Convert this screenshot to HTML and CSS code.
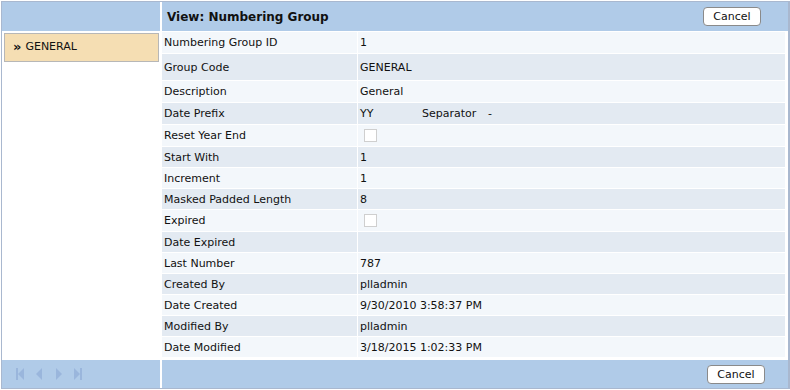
FILE: index.html
```html
<!DOCTYPE html>
<html lang="en">

<head>
    <meta charset="UTF-8">
    <title>View: Numbering Group</title>
    <link rel="stylesheet" href="styles.css">
</head>

<body>
    <div class="panel">
        <div class="head-left"></div>
        <div class="head-right">
            <span class="title">View: Numbering Group</span>
            <button class="btn">Cancel</button>
        </div>

        <div class="side">
            <div class="side-item"><span class="raquo">&raquo;</span> GENERAL</div>
        </div>
        <div class="content">
            <table class="details">
                <tr class="odd"><td class="label">Numbering Group ID</td><td>1</td></tr>
                <tr class="even tall"><td class="label">Group Code</td><td>GENERAL</td></tr>
                <tr class="odd"><td class="label">Description</td><td>General</td></tr>
                <tr class="even"><td class="label">Date Prefix</td><td><span class="prefix">YY</span><span class="sep">Separator</span>-</td></tr>
                <tr class="odd"><td class="label">Reset Year End</td><td><span class="check"></span></td></tr>
                <tr class="even short"><td class="label">Start With</td><td>1</td></tr>
                <tr class="odd short"><td class="label">Increment</td><td>1</td></tr>
                <tr class="even short"><td class="label">Masked Padded Length</td><td>8</td></tr>
                <tr class="odd"><td class="label">Expired</td><td><span class="check"></span></td></tr>
                <tr class="even short"><td class="label">Date Expired</td><td></td></tr>
                <tr class="odd short"><td class="label">Last Number</td><td>787</td></tr>
                <tr class="even short"><td class="label">Created By</td><td>plladmin</td></tr>
                <tr class="odd short"><td class="label">Date Created</td><td>9/30/2010 3:58:37 PM</td></tr>
                <tr class="even short"><td class="label">Modified By</td><td>plladmin</td></tr>
                <tr class="odd short"><td class="label">Date Modified</td><td>3/18/2015 1:02:33 PM</td></tr>
            </table>
        </div>

        <div class="foot-left">
            <!-- pager, disabled -->
            <svg class="pager" width="80" height="14" viewBox="0 0 80 14">
                <rect x="2" y="1" width="2" height="12" />
                <polygon points="10,1 4,7 10,13" />
                <polygon points="28,1 22,7 28,13" />
                <polygon points="42,1 48,7 42,13" />
                <polygon points="60,1 66,7 60,13" />
                <rect x="66" y="1" width="2" height="12" />
            </svg>
        </div>
        <div class="foot-right">
            <button class="btn">Cancel</button>
        </div>
    </div>
</body>

</html>
```

FILE: styles.css
```css
body {
    margin: 0;
    padding: 0;
    background-color: #fff;
    font-family: 'DejaVu Sans', Verdana, sans-serif;
    font-size: 11px;
    color: #111;
}

.panel {
    box-sizing: border-box;
    margin: 1px 0 0 1px;
    width: 789px;
    height: 388px;
    border: 1px solid #a9b8cf;
    border-right-width: 2px;
    padding: 0;
    display: grid;
    grid-template-columns: 158px 1fr;
    grid-template-rows: 29px 1fr 28px;
    column-gap: 2px;
    row-gap: 1px;
}

.head-left,
.head-right,
.foot-left,
.foot-right {
    background-color: #b0cbe8;
}

.head-right {
    display: flex;
    align-items: center;
    justify-content: space-between;
    padding: 0 27px 0 5px;
}

.title {
    font-size: 12px;
    font-weight: bold;
    color: #111;
}

.btn {
    box-sizing: border-box;
    width: 58px;
    height: 19px;
    padding: 0;
    background-color: #fff;
    border: 1px solid #8a8a8a;
    border-radius: 4px;
    font-family: 'DejaVu Sans', Verdana, sans-serif;
    font-size: 11px;
    color: #111;
}

.side {
    padding: 1px 0 0 2px;
}

.side-item {
    box-sizing: border-box;
    width: 155px;
    height: 29px;
    padding: 0 8px 2px;
    display: flex;
    align-items: center;
    background-color: #f5deb3;
    border: 1px solid #b7b7b7;
}

.raquo {
    font-size: 13px;
    font-weight: bold;
    margin-right: 4px;
}

.content {
    padding-right: 3px;
}

.details {
    width: 100%;
    border-collapse: collapse;
}

.details td {
    height: 21px;
    padding: 0 0 0 2px;
    border-bottom: 1px solid #fff;
    vertical-align: middle;
}

.details tr.tall td {
    height: 26px;
}

.details tr.short td {
    height: 20px;
}

.details td.label {
    width: 193px;
    border-right: 1px solid #fff;
}

.odd td {
    background-color: #f3f7fb;
}

.even td {
    background-color: #e3eaf2;
}

.prefix {
    display: inline-block;
    width: 62px;
}

.sep {
    display: inline-block;
    width: 66px;
}

.check {
    display: inline-block;
    box-sizing: border-box;
    width: 13px;
    height: 13px;
    margin: 3px 0 0 4px;
    background-color: #fff;
    border: 1px solid #cfcfcf;
}

.foot-left {
    display: flex;
    align-items: center;
    padding-left: 12px;
}

.pager {
    fill: #9ab6dc;
}

.foot-right {
    display: flex;
    align-items: center;
    justify-content: flex-end;
    padding-right: 23px;
}
```
